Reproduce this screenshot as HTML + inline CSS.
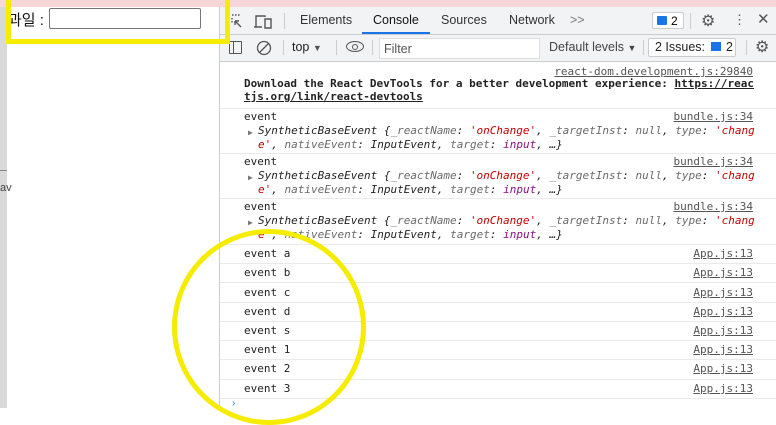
<!DOCTYPE html>
<html><head><meta charset="utf-8"><style>
*{margin:0;padding:0;box-sizing:border-box}
body{width:776px;height:408px;overflow:hidden;background:#fff;position:relative;font-family:"Liberation Sans",sans-serif}
.a{position:absolute}
.mono{font-family:"DejaVu Sans Mono","Liberation Mono",monospace;font-size:11px;color:#222}
.row{position:absolute;left:220px;width:556px;border-bottom:1px solid #eaeaea}
.row .t{position:absolute;left:24px;white-space:nowrap}
.lnk{position:absolute;right:23px;text-decoration:underline;color:#555}
i{font-style:italic}
.s{color:#c80000}.k{color:#6a6a6a}.p{color:#881280}
.tab{position:absolute;top:13px;font-size:12.5px;color:#333}
</style></head><body>
<div class="a" style="left:0;top:0;width:776px;height:7px;background:#f7d6da"></div>
<div class="a" style="left:0;top:7px;width:7px;height:401px;background:#d9d9d9"></div>
<div class="a" style="left:0;top:170px;width:7px;height:1px;background:#888"></div>
<div class="a" style="left:0;top:182px;font-size:11px;color:#444">av</div>
<div class="a" style="left:8px;top:9px;font-size:15px;color:#111;font-family:'Liberation Sans','Noto Sans CJK KR',sans-serif">과일 :</div>
<div class="a" style="left:49px;top:8px;width:152px;height:21px;border:1px solid #767676;border-radius:2px"></div>
<div class="a" style="left:219px;top:7px;width:1px;height:401px;background:#ccc"></div>
<!-- toolbar 1 -->
<div class="a" style="left:220px;top:7px;width:556px;height:28px;background:#f1f3f4;border-bottom:1px solid #ccc"></div>
<svg class="a" style="left:228px;top:12px" width="50" height="18"><path d="M4 3h1.5M7 3h1.5M10 3h1.5M4 6v1.5M4 9v1.5M7 9l6 6M7 9h4M7 9v4" stroke="#555" fill="none" stroke-width="1.4"/><path d="M37 5v-1h-9v11M26 15h8M37 7h6v9h-6z" stroke="#555" fill="none" stroke-width="1.4"/></svg>
<div class="a" style="left:284px;top:13px;width:1px;height:16px;background:#ccc"></div>
<div class="tab" style="left:300px">Elements</div>
<div class="tab" style="left:373px;color:#111">Console</div>
<div class="a" style="left:362px;top:32px;width:68px;height:2px;background:#1a73e8"></div>
<div class="tab" style="left:441px">Sources</div>
<div class="tab" style="left:509px">Network</div>
<div class="tab" style="left:570px;color:#777">&gt;&gt;</div>
<div class="a" style="left:652px;top:12px;width:32px;height:17px;border:1px solid #ccc;border-radius:2px;background:#fff;font-size:12px;padding-left:18px;padding-top:1px">2</div>
<div class="a" style="left:657px;top:16px;width:10px;height:9px;background:#1a73e8;border-radius:1px"></div>
<div class="a" style="left:690px;top:13px;width:1px;height:16px;background:#ccc"></div>
<div class="a" style="left:701px;top:11px;font-size:16px;color:#555">⚙</div>
<div class="a" style="left:733px;top:12px;font-size:13px;color:#555">⋮</div>
<div class="a" style="left:757px;top:10px;font-size:15px;color:#555">✕</div>
<!-- toolbar 2 -->
<div class="a" style="left:220px;top:35px;width:556px;height:27px;background:#f1f3f4;border-bottom:1px solid #ccc"></div>
<div class="a" style="left:229px;top:41px;width:13px;height:13px;border:1.3px solid #555;border-radius:1px"></div>
<div class="a" style="left:233px;top:41px;width:1.3px;height:13px;background:#555"></div>
<svg class="a" style="left:256px;top:40px" width="16" height="16"><circle cx="8" cy="8" r="6.5" stroke="#555" fill="none" stroke-width="1.3"/><path d="M3.5 12.5l9-9" stroke="#555" stroke-width="1.3"/></svg>
<div class="a" style="left:283px;top:40px;width:1px;height:15px;background:#ccc"></div>
<div class="a" style="left:292px;top:40px;font-size:12.5px;color:#222">top <span style="font-size:9px;color:#555">▼</span></div>
<div class="a" style="left:336px;top:40px;width:1px;height:15px;background:#ccc"></div>
<div class="a" style="left:346px;top:41px;width:18px;height:11px;border:1.5px solid #555;border-radius:50%"></div>
<div class="a" style="left:352px;top:44px;width:6px;height:6px;border:1.3px solid #555;border-radius:50%"></div>
<div class="a" style="left:372px;top:40px;width:1px;height:15px;background:#ccc"></div>
<div class="a" style="left:379px;top:38px;width:161px;height:21px;background:#fff;border:1px solid #ddd;font-size:12.5px;color:#555;padding:3px 0 0 4px">Filter</div>
<div class="a" style="left:549px;top:40px;font-size:12.5px;color:#444">Default levels <span style="font-size:9px">▼</span></div>
<div class="a" style="left:643px;top:40px;width:1px;height:15px;background:#ccc"></div>
<div class="a" style="left:648px;top:38px;width:88px;height:19px;border:1px solid #ccc;border-radius:2px;background:#fff;font-size:12.5px;color:#222;padding:1px 0 0 6px">2 Issues: <span style="display:inline-block;width:10px;height:9px;background:#1a73e8;margin:0 2px 0 2px"></span> 2</div>
<div class="a" style="left:746px;top:40px;width:1px;height:15px;background:#ccc"></div>
<div class="a" style="left:755px;top:37px;font-size:16px;color:#555">⚙</div>
<!-- messages -->
<div class="row mono" style="top:62px;height:47px">
<div class="lnk" style="top:3px">react-dom.development.js:29840</div>
<div class="t" style="top:15px;font-weight:bold;line-height:13px">Download the React DevTools for a better development experience: <u>https://reac</u><br><u>tjs.org/link/react-devtools</u></div>
</div>
<div class="row mono" style="top:109px;height:45px"><div class="t" style="top:1px">event</div><div class="lnk" style="top:1px">bundle.js:34</div>
<div class="a" style="left:28px;top:19px;font-size:8px;color:#777">▶</div>
<div class="t" style="left:38px;top:15px;line-height:13.5px"><i>SyntheticBaseEvent {<span class="k">_reactName</span>: <span class="s">'onChange'</span>, <span class="k">_targetInst</span>: <span class="k">null</span>, <span class="k">type</span>: <span class="s">'chang<br>e'</span>, <span class="k">nativeEvent</span>: InputEvent, <span class="k">target</span>: <span class="p">input</span>, …}</i></div></div>
<div class="row mono" style="top:154px;height:45px"><div class="t" style="top:1px">event</div><div class="lnk" style="top:1px">bundle.js:34</div>
<div class="a" style="left:28px;top:19px;font-size:8px;color:#777">▶</div>
<div class="t" style="left:38px;top:15px;line-height:13.5px"><i>SyntheticBaseEvent {<span class="k">_reactName</span>: <span class="s">'onChange'</span>, <span class="k">_targetInst</span>: <span class="k">null</span>, <span class="k">type</span>: <span class="s">'chang<br>e'</span>, <span class="k">nativeEvent</span>: InputEvent, <span class="k">target</span>: <span class="p">input</span>, …}</i></div></div>
<div class="row mono" style="top:199px;height:46px"><div class="t" style="top:1px">event</div><div class="lnk" style="top:1px">bundle.js:34</div>
<div class="a" style="left:28px;top:19px;font-size:8px;color:#777">▶</div>
<div class="t" style="left:38px;top:15px;line-height:13.5px"><i>SyntheticBaseEvent {<span class="k">_reactName</span>: <span class="s">'onChange'</span>, <span class="k">_targetInst</span>: <span class="k">null</span>, <span class="k">type</span>: <span class="s">'chang<br>e'</span>, <span class="k">nativeEvent</span>: InputEvent, <span class="k">target</span>: <span class="p">input</span>, …}</i></div></div>
<div class="row mono" style="top:245px;height:19px"><div class="t" style="top:2px">event a</div><div class="lnk" style="top:2px">App.js:13</div></div>
<div class="row mono" style="top:264px;height:19px"><div class="t" style="top:2px">event b</div><div class="lnk" style="top:2px">App.js:13</div></div>
<div class="row mono" style="top:283px;height:20px"><div class="t" style="top:3px">event c</div><div class="lnk" style="top:3px">App.js:13</div></div>
<div class="row mono" style="top:303px;height:19px"><div class="t" style="top:2px">event d</div><div class="lnk" style="top:2px">App.js:13</div></div>
<div class="row mono" style="top:322px;height:19px"><div class="t" style="top:2px">event s</div><div class="lnk" style="top:2px">App.js:13</div></div>
<div class="row mono" style="top:341px;height:19px"><div class="t" style="top:2px">event 1</div><div class="lnk" style="top:2px">App.js:13</div></div>
<div class="row mono" style="top:360px;height:20px"><div class="t" style="top:2px">event 2</div><div class="lnk" style="top:2px">App.js:13</div></div>
<div class="row mono" style="top:380px;height:19px"><div class="t" style="top:2px">event 3</div><div class="lnk" style="top:2px">App.js:13</div></div>
<div class="a" style="left:232px;top:398px;font-size:10px;color:#1a73e8">›</div>
<!-- annotations -->
<div class="a" style="left:6px;top:-10px;width:224px;height:54px;border:5px solid #f5ec00"></div>
<div class="a" style="left:172px;top:229px;width:194px;height:196px;border:5px solid #f5ec00;border-radius:50%"></div>
</body></html>
